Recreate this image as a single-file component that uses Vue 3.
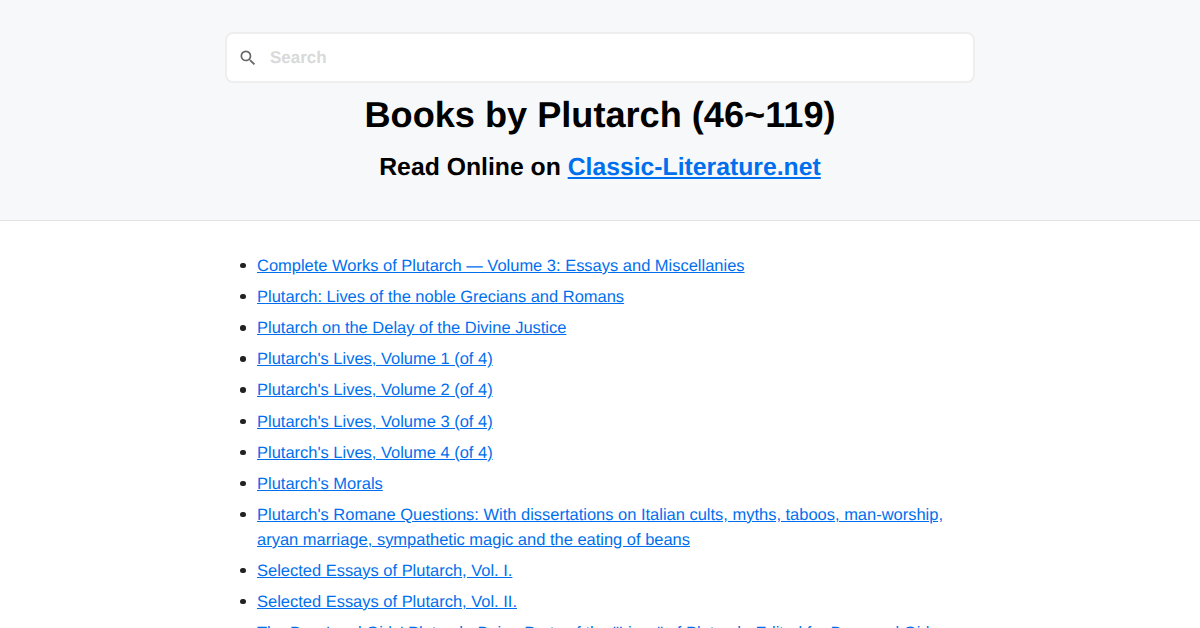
<script setup>
const books = [
  "Complete Works of Plutarch — Volume 3: Essays and Miscellanies",
  "Plutarch: Lives of the noble Grecians and Romans",
  "Plutarch on the Delay of the Divine Justice",
  "Plutarch's Lives, Volume 1 (of 4)",
  "Plutarch's Lives, Volume 2 (of 4)",
  "Plutarch's Lives, Volume 3 (of 4)",
  "Plutarch's Lives, Volume 4 (of 4)",
  "Plutarch's Morals",
  "Plutarch's Romane Questions: With dissertations on Italian cults, myths, taboos, man-worship, aryan marriage, sympathetic magic and the eating of beans",
  "Selected Essays of Plutarch, Vol. I.",
  "Selected Essays of Plutarch, Vol. II.",
  "The Boys' and Girls' Plutarch: Being Parts of the \"Lives\" of Plutarch, Edited for Boys and Girls"
]
</script>

<template>
  <div class="page">
    <header class="hero">
      <div class="search">
        <svg class="icon" viewBox="0 0 24 24" width="24" height="24" aria-hidden="true">
          <path fill="#666" d="M15.5 14h-.79l-.28-.27A6.47 6.47 0 0 0 16 9.5 6.5 6.5 0 1 0 9.5 16c1.61 0 3.09-.59 4.23-1.57l.27.28v.79l5 4.99L20.49 19l-4.99-5zm-6 0C7.01 14 5 11.99 5 9.5S7.01 5 9.5 5 14 7.01 14 9.5 11.99 14 9.5 14z"/>
        </svg>
        <input class="input" type="text" placeholder="Search" />
      </div>
      <h1 class="title">Books by Plutarch (46~119)</h1>
      <h2 class="subtitle">Read Online on <a href="#">Classic-Literature.net</a></h2>
    </header>
    <main class="content">
      <ul class="list">
        <li v-for="book in books" :key="book"><a href="#">{{ book }}</a></li>
      </ul>
    </main>
  </div>
</template>

<style scoped>
.page {
  font-family: "Liberation Sans", Arial, sans-serif;
  color: #000;
  background: #fff;
  text-rendering: geometricPrecision;
}
.hero {
  background: #f7f8fa;
  border-bottom: 1px solid #e2e3e5;
  padding: 32px 0 37px;
  display: flex;
  flex-direction: column;
  align-items: center;
}
.search {
  width: 750px;
  height: 51px;
  flex: none;
  box-sizing: border-box;
  background: #fff;
  border: 2px solid #eeeeee;
  border-radius: 8px;
  display: flex;
  align-items: center;
  padding-left: 11px;
  gap: 12px;
}
.icon {
  width: 20px;
  height: 20px;
  flex: none;
}
.input {
  flex: 1;
  border: none;
  outline: none;
  background: transparent;
  font: bold 17px "Liberation Sans", Arial, sans-serif;
  text-rendering: geometricPrecision;
  color: #000;
  padding: 0;
}
.input::placeholder {
  color: #d9d9d9;
  opacity: 1;
}
.title {
  margin: 10px 0 0;
  font-size: 36.15px;
  line-height: 44px;
  font-weight: 700;
  text-align: center;
}
.subtitle {
  margin: 16px 0 0;
  font-size: 24.75px;
  line-height: 30px;
  font-weight: 700;
  text-align: center;
}
a {
  color: #006fee;
  text-decoration: underline;
}
.content {
  width: 750px;
  margin: 0 auto;
  padding: 32.8px 0;
}
.list {
  margin: 0;
  padding-left: 32px;
  list-style: none;
  font-size: 16.48px;
  line-height: 24.75px;
  color: #222;
}
.list li {
  position: relative;
  margin-bottom: 6.4px;
}
.list li::before {
  content: "";
  position: absolute;
  left: -17px;
  top: 9px;
  width: 5.5px;
  height: 5.5px;
  border-radius: 50%;
  background: #222;
}
</style>

<style>
html, body { margin: 0; overflow: hidden; }
</style>
